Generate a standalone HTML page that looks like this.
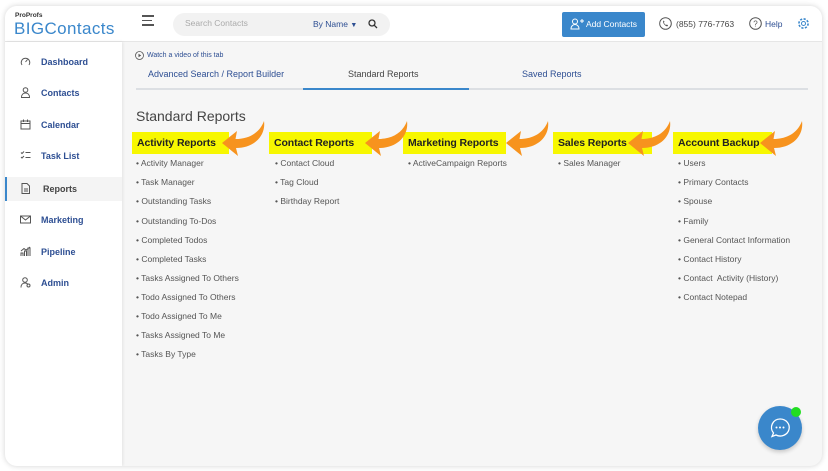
<!DOCTYPE html>
<html><head><meta charset="utf-8"><style>
*{box-sizing:border-box;margin:0;padding:0}
body{width:828px;height:471px;background:#fff;font-family:"Liberation Sans",Arial,sans-serif;position:relative;overflow:hidden}
.card{position:absolute;left:5px;top:6px;width:817px;height:460px;border-radius:12px;background:#f6f6f6;box-shadow:0 0 6px rgba(0,0,0,.18);overflow:hidden}
.hdr{position:absolute;left:0;top:0;width:817px;height:36px;background:#fff;border-bottom:1px solid #e6e6e6}
.side{position:absolute;left:0;top:36px;width:117px;height:424px;background:#fff;box-shadow:1px 0 3px rgba(0,0,0,.08)}
.nav{position:absolute;left:0;height:24px;width:117px;font-size:9px;font-weight:bold;color:#2e4f93;line-height:24px;padding-left:36px}
.nav svg{position:absolute;left:15px;top:6px}
.nav.act{background:#f4f4f4;border-left:2px solid #3a87cb;color:#444}
.t{position:absolute;white-space:nowrap}
.li{position:absolute;font-size:8.5px;color:#555;white-space:nowrap}
.hl{position:absolute;top:126px;height:22px;background:#f7f700;font-size:10.5px;font-weight:bold;color:#222;line-height:22px;padding-left:5px;letter-spacing:-.1px}
.ar{position:absolute;top:114px}
</style></head><body>
<div class="card">
<div class="hdr">
 <div class="t" style="left:10px;top:6px;font-size:6.5px;font-weight:bold;color:#333">ProProfs</div>
 <div class="t" style="left:9px;top:13px;font-size:17px;color:#3a87cb;letter-spacing:.4px">BIGContacts</div>
 <div class="t" style="left:137px;top:9px;width:12px">
  <div style="height:1.5px;background:#555;margin-bottom:3px"></div><div style="height:1.5px;background:#555;margin-bottom:3px;width:10px"></div><div style="height:1.5px;background:#555"></div></div>
 <div style="position:absolute;left:168px;top:7px;width:217px;height:23px;border-radius:12px;background:#f2f2f2"></div>
 <div class="t" style="left:180px;top:12px;font-size:8.5px;color:#aaa">Search Contacts</div>
 <div class="t" style="left:308px;top:13px;font-size:8.5px;color:#2e4f93">By Name <span style="font-size:7px">▼</span></div>
 <svg class="t" style="left:363px;top:13px" width="10" height="10" viewBox="0 0 10 10"><circle cx="4" cy="4" r="3" fill="none" stroke="#333" stroke-width="1.3"/><path d="M6.3 6.3L9 9" stroke="#333" stroke-width="1.3"/></svg>
 <div style="position:absolute;left:557px;top:6px;width:83px;height:25px;background:#3a87cb;border-radius:2px;color:#fff;font-size:8.5px;line-height:25px;padding-left:24px">Add Contacts</div>
 <svg class="t" style="left:565px;top:12px" width="14" height="12" viewBox="0 0 14 12"><circle cx="5" cy="3.5" r="2.5" fill="none" stroke="#fff"/><path d="M1 11c0-3 2-4.5 4-4.5s4 1.5 4 4.5z" fill="none" stroke="#fff"/><path d="M10 3h4M12 1v4" stroke="#fff"/></svg>
 <svg class="t" style="left:654px;top:11px" width="13" height="13" viewBox="0 0 13 13"><circle cx="6.5" cy="6.5" r="5.8" fill="none" stroke="#555"/><path d="M4.5 3.5c-1 1 0 4 2.5 5.5c1 .5 2 .3 2-.5l-1-1-1 .5c-1-.5-2-1.7-2-2.5l.5-1z" fill="#555"/></svg>
 <div class="t" style="left:671px;top:13px;font-size:8.5px;color:#444">(855) 776-7763</div>
 <svg class="t" style="left:744px;top:11px" width="13" height="13" viewBox="0 0 13 13"><circle cx="6.5" cy="6.5" r="5.8" fill="none" stroke="#555"/><text x="6.5" y="9.5" font-size="8" text-anchor="middle" fill="#555" font-family="Liberation Sans">?</text></svg>
 <div class="t" style="left:760px;top:13px;font-size:8.5px;color:#2e4f93">Help</div>
 <svg class="t" style="left:792px;top:11px" width="13" height="13" viewBox="0 0 13 13"><circle cx="6.5" cy="6.5" r="4.6" fill="none" stroke="#3a87cb" stroke-width="1.6" stroke-dasharray="2.2 1.4"/><circle cx="6.5" cy="6.5" r="2" fill="none" stroke="#3a87cb"/></svg>
</div>
<div class="side">
 <div class="nav" style="top:8px"><svg width="11" height="11" viewBox="0 0 11 11"><path d="M2 9A4.3 4.3 0 1 1 9 9" fill="none" stroke="#555"/><path d="M5.5 6L7.5 3.5" stroke="#555"/></svg>Dashboard</div>
 <div class="nav" style="top:39px"><svg width="11" height="11" viewBox="0 0 11 11"><circle cx="5.5" cy="3" r="2.3" fill="none" stroke="#555"/><path d="M1.5 10.5c0-3 1.8-4.5 4-4.5s4 1.5 4 4.5z" fill="none" stroke="#555"/></svg>Contacts</div>
 <div class="nav" style="top:71px"><svg width="11" height="11" viewBox="0 0 11 11"><rect x="1" y="2" width="9" height="8" fill="none" stroke="#555"/><path d="M1 4.5h9M3.5 .5v2.5M7.5 .5v2.5" stroke="#555"/></svg>Calendar</div>
 <div class="nav" style="top:102px"><svg width="11" height="11" viewBox="0 0 11 11"><path d="M1 2.5l1 1 2-2M1 7l1 1 2-2M5.5 2.5h5M5.5 7.5h5" fill="none" stroke="#555"/></svg>Task List</div>
 <div class="nav act" style="top:135px"><svg width="11" height="11" viewBox="0 0 11 11" style="left:13px"><path d="M2 .5h5l2.5 2.5v7.5H2z" fill="none" stroke="#555"/><path d="M4 6h4M4 8h4" stroke="#555"/></svg>Reports</div>
 <div class="nav" style="top:166px"><svg width="11" height="11" viewBox="0 0 11 11"><rect x=".5" y="2" width="10" height="7" fill="none" stroke="#555"/><path d="M.5 2l5 4 5-4" fill="none" stroke="#555"/></svg>Marketing</div>
 <div class="nav" style="top:198px"><svg width="11" height="11" viewBox="0 0 11 11"><path d="M1 10V7h2v3M4.5 10V5h2v5M8 10V2h2v8M1 5l3-2.5 2 1.5 4-3" fill="none" stroke="#555"/></svg>Pipeline</div>
 <div class="nav" style="top:229px"><svg width="11" height="11" viewBox="0 0 11 11"><circle cx="5" cy="3" r="2.3" fill="none" stroke="#555"/><path d="M1 10.5c0-3 1.8-4.5 4-4.5 1 0 2 .3 2.7 1" fill="none" stroke="#555"/><circle cx="8.5" cy="8.5" r="1.5" fill="none" stroke="#555"/></svg>Admin</div>
</div>
<svg class="t" style="left:130px;top:45px" width="9" height="9" viewBox="0 0 9 9"><circle cx="4.5" cy="4.5" r="4" fill="none" stroke="#555" stroke-width=".8"/><path d="M3.5 2.8v3.4l2.7-1.7z" fill="#555"/></svg>
<div class="t" style="left:142px;top:46px;font-size:7px;color:#2e4f93">Watch a video of this tab</div>
<div class="t" style="left:143px;top:63px;font-size:9px;color:#2e4f93">Advanced Search / Report Builder</div>
<div class="t" style="left:343px;top:63px;font-size:9px;color:#444">Standard Reports</div>
<div class="t" style="left:517px;top:63px;font-size:9px;color:#2e4f93">Saved Reports</div>
<div style="position:absolute;left:131px;top:82px;width:672px;height:2px;background:#dcdfe3"></div>
<div style="position:absolute;left:298px;top:82px;width:166px;height:2px;background:#3a87cb"></div>
<div class="t" style="left:131px;top:102px;font-size:14px;color:#444">Standard Reports</div>

<div class="hl" style="left:127px;width:97px">Activity Reports</div>
<div class="hl" style="left:264px;width:103px">Contact Reports</div>
<div class="hl" style="left:398px;width:103px">Marketing Reports</div>
<div class="hl" style="left:548px;width:99px">Sales Reports</div>
<div class="hl" style="left:668px;width:99px">Account Backup</div>

<svg class="ar" style="left:217px" width="46" height="40" viewBox="0 0 46 40"><path d="M0 23L15 11L13.5 19C28 19 38 12 42 1C44 15 33 28 14 28L16 36Z" fill="#f7931e"/></svg>
<svg class="ar" style="left:360px" width="46" height="40" viewBox="0 0 46 40"><path d="M0 23L15 11L13.5 19C28 19 38 12 42 1C44 15 33 28 14 28L16 36Z" fill="#f7931e"/></svg>
<svg class="ar" style="left:501px" width="46" height="40" viewBox="0 0 46 40"><path d="M0 23L15 11L13.5 19C28 19 38 12 42 1C44 15 33 28 14 28L16 36Z" fill="#f7931e"/></svg>
<svg class="ar" style="left:623px" width="46" height="40" viewBox="0 0 46 40"><path d="M0 23L15 11L13.5 19C28 19 38 12 42 1C44 15 33 28 14 28L16 36Z" fill="#f7931e"/></svg>
<svg class="ar" style="left:755px" width="46" height="40" viewBox="0 0 46 40"><path d="M0 23L15 11L13.5 19C28 19 38 12 42 1C44 15 33 28 14 28L16 36Z" fill="#f7931e"/></svg>

<div class="li" style="left:131px;top:152px">• Activity Manager</div>
<div class="li" style="left:131px;top:171px">• Task Manager</div>
<div class="li" style="left:131px;top:190px">• Outstanding Tasks</div>
<div class="li" style="left:131px;top:210px">• Outstanding To-Dos</div>
<div class="li" style="left:131px;top:229px">• Completed Todos</div>
<div class="li" style="left:131px;top:248px">• Completed Tasks</div>
<div class="li" style="left:131px;top:267px">• Tasks Assigned To Others</div>
<div class="li" style="left:131px;top:286px">• Todo Assigned To Others</div>
<div class="li" style="left:131px;top:305px">• Todo Assigned To Me</div>
<div class="li" style="left:131px;top:324px">• Tasks Assigned To Me</div>
<div class="li" style="left:131px;top:343px">• Tasks By Type</div>

<div class="li" style="left:270px;top:152px">• Contact Cloud</div>
<div class="li" style="left:270px;top:171px">• Tag Cloud</div>
<div class="li" style="left:270px;top:190px">• Birthday Report</div>

<div class="li" style="left:403px;top:152px">• ActiveCampaign Reports</div>
<div class="li" style="left:553px;top:152px">• Sales Manager</div>

<div class="li" style="left:673px;top:152px">• Users</div>
<div class="li" style="left:673px;top:171px">• Primary Contacts</div>
<div class="li" style="left:673px;top:190px">• Spouse</div>
<div class="li" style="left:673px;top:210px">• Family</div>
<div class="li" style="left:673px;top:229px">• General Contact Information</div>
<div class="li" style="left:673px;top:248px">• Contact History</div>
<div class="li" style="left:673px;top:267px">• Contact&nbsp; Activity (History)</div>
<div class="li" style="left:673px;top:286px">• Contact Notepad</div>

<div style="position:absolute;left:753px;top:400px;width:44px;height:44px;border-radius:50%;background:#3a87cb;box-shadow:0 2px 4px rgba(0,0,0,.2)"></div>
<svg class="t" style="left:763px;top:410px" width="24" height="24" viewBox="0 0 24 24"><path d="M12 3a9 8.5 0 1 1-4 16l-4 1.5 1.5-3.5A8.5 8.5 0 0 1 12 3z" fill="none" stroke="#fff" stroke-width="1.3"/><circle cx="8.5" cy="11.5" r="1" fill="#fff"/><circle cx="12" cy="11.5" r="1" fill="#fff"/><circle cx="15.5" cy="11.5" r="1" fill="#fff"/></svg>
<div style="position:absolute;left:786px;top:401px;width:10px;height:10px;border-radius:50%;background:#22dd22"></div>
</div>
</body></html>
